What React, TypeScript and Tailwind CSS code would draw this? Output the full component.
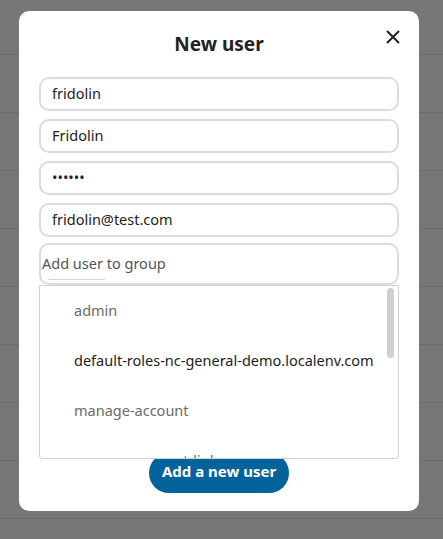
import React from "react";

const GROUPS = [
  { name: "admin", muted: true },
  { name: "default-roles-nc-general-demo.localenv.com", muted: false },
  { name: "manage-account", muted: true },
  { name: "manage-account-links", muted: true },
];

const FIELDS = ["fridolin", "Fridolin", "••••••", "fridolin@test.com"];

export default function App() {
  return (
    <div
      className="relative h-[539px] w-[443px] overflow-hidden bg-[#777777]"
      style={{ fontFamily: '"Noto Sans", "Open Sans", sans-serif' }}
    >
      {/* table rows behind the overlay */}
      <div className="h-[55px] border-b border-[#6c6c6c]" />
      {Array.from({ length: 8 }).map((_, i) => (
        <div key={i} className="h-[58px] border-b border-[#6c6c6c]" />
      ))}

      {/* modal */}
      <div className="absolute left-[19px] top-[11px] flex h-[500px] w-[400px] flex-col rounded-[10px] bg-white px-[20px]">
        <button className="absolute right-[19px] top-[19px] text-[#222]">
          <svg width="14" height="14" viewBox="0 0 14 14" fill="none">
            <path d="M1 1L13 13M13 1L1 13" stroke="currentColor" strokeWidth="2" />
          </svg>
        </button>

        <h2 className="mt-[20px] text-center text-[19px] font-bold leading-[26px] text-[#222]">
          New user
        </h2>

        <div className="mt-[20px] flex flex-col gap-[8px]">
          {FIELDS.map((v) => (
            <div
              key={v}
              className="flex h-[34px] items-center rounded-[10px] border-2 border-[#dcdcdc] px-[11px] text-[14.5px] text-[#222]"
            >
              {v}
            </div>
          ))}
        </div>

        <div className="relative mt-[6px]">
          <div className="relative flex h-[42px] items-center rounded-[10px] border-2 border-[#dcdcdc] pl-[1px] text-[14.5px] text-[#555]">
            Add user to group
            <div className="absolute bottom-[3px] left-[6px] h-[4px] w-[60px] rounded-b-[4px] border-b border-[#d4d4d4]" />
          </div>

          {/* dropdown list */}
          <div className="absolute left-0 right-0 top-[42px] z-10 h-[174px] overflow-hidden rounded-b-[3px] border border-[#d2d2d2] bg-white">
            {GROUPS.map((g) => (
              <div
                key={g.name}
                className={`flex h-[50px] items-center pl-[34px] text-[14.5px] ${
                  g.muted ? "text-[#6b6b6b]" : "text-[#1e1e1e]"
                }`}
              >
                {g.name}
              </div>
            ))}
            <div className="absolute right-[4px] top-[2px] h-[70px] w-[7px] rounded-full bg-[#cfcfcf]" />
          </div>
        </div>

        <div className="mt-[168px] flex justify-center">
          <button className="h-[40px] w-[140px] rounded-full bg-[#03639a] pb-[3px] text-[15px] font-bold text-white">
            Add a new user
          </button>
        </div>
      </div>
    </div>
  );
}
